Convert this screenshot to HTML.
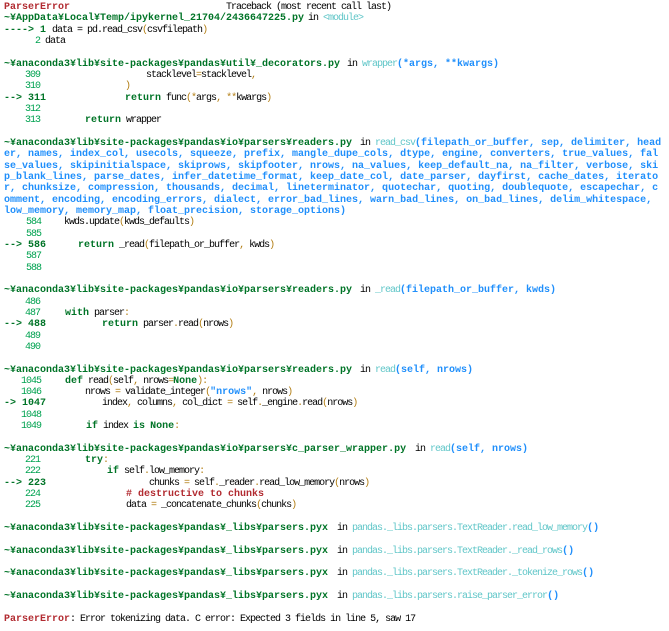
<!DOCTYPE html>
<html><head><meta charset="utf-8">
<style>
html,body{margin:0;padding:0;background:#fff;width:669px;height:629px;overflow:hidden}
body{font-family:"Liberation Mono","Noto Sans CJK JP",monospace;font-size:10px;color:#000;padding-top:2px}
.row{position:relative;height:11.33px;line-height:11.33px}
.row>span{position:absolute;top:0;white-space:pre}
.n{letter-spacing:-1px}
.b{font-weight:bold;letter-spacing:0}
.R{color:#b22b31}.G{color:#007427}.g{color:#00a250}.C{color:#60c6c8}.B{color:#208ffb}.O{color:#b27d12}
</style></head><body>
<div class="row"><span class="b R" style="left:4px">ParserError</span><span class="n" style="left:226px">Traceback (most recent call last)</span></div>
<div class="row"><span class="b G" style="left:4px">~¥AppData¥Local¥Temp/ipykernel_21704/2436647225.py</span><span class="n" style="left:308px">in <span class="C">&lt;module&gt;</span></span></div>
<div class="row"><span class="b G" style="left:4px">----&gt; 1</span><span class="n" style="left:52px">data = pd.read_csv<span class="O">(</span>csvfilepath<span class="O">)</span></span></div>
<div class="row"><span class="n g" style="left:35px">2</span><span class="n" style="left:45px">data</span></div>
<div class="row"></div>
<div class="row"><span class="b G" style="left:4px">~¥anaconda3¥lib¥site-packages¥pandas¥util¥_decorators.py</span><span class="n" style="left:347px">in <span class="C">wrapper</span><span class="b B">(*args, **kwargs)</span></span></div>
<div class="row"><span class="n g" style="left:25px">309</span><span class="n" style="left:146px">stacklevel<span class="O">=</span>stacklevel<span class="O">,</span></span></div>
<div class="row"><span class="n g" style="left:25px">310</span><span class="n" style="left:125px"><span class="O">)</span></span></div>
<div class="row"><span class="b G" style="left:4px">--&gt; 311</span><span class="n" style="left:125px"><span class="b G">return</span> func<span class="O">(*</span>args<span class="O">,</span> <span class="O">**</span>kwargs<span class="O">)</span></span></div>
<div class="row"><span class="n g" style="left:25px">312</span></div>
<div class="row"><span class="n g" style="left:25px">313</span><span class="n" style="left:85px"><span class="b G">return</span> wrapper</span></div>
<div class="row"></div>
<div class="row"><span class="b G" style="left:4px">~¥anaconda3¥lib¥site-packages¥pandas¥io¥parsers¥readers.py</span><span class="n" style="left:360px">in <span class="C">read_csv</span><span class="b B">(filepath_or_buffer, sep, delimiter, head</span></span></div>
<div class="row"><span class="b B" style="left:4px">er, names, index_col, usecols, squeeze, prefix, mangle_dupe_cols, dtype, engine, converters, true_values, fal</span></div>
<div class="row"><span class="b B" style="left:4px">se_values, skipinitialspace, skiprows, skipfooter, nrows, na_values, keep_default_na, na_filter, verbose, ski</span></div>
<div class="row"><span class="b B" style="left:4px">p_blank_lines, parse_dates, infer_datetime_format, keep_date_col, date_parser, dayfirst, cache_dates, iterato</span></div>
<div class="row"><span class="b B" style="left:4px">r, chunksize, compression, thousands, decimal, lineterminator, quotechar, quoting, doublequote, escapechar, c</span></div>
<div class="row"><span class="b B" style="left:4px">omment, encoding, encoding_errors, dialect, error_bad_lines, warn_bad_lines, on_bad_lines, delim_whitespace,</span></div>
<div class="row"><span class="b B" style="left:4px">low_memory, memory_map, float_precision, storage_options)</span></div>
<div class="row"><span class="n g" style="left:26px">584</span><span class="n" style="left:64px">kwds.update<span class="O">(</span>kwds_defaults<span class="O">)</span></span></div>
<div class="row"><span class="n g" style="left:26px">585</span></div>
<div class="row"><span class="b G" style="left:4px">--&gt; 586</span><span class="n" style="left:78px"><span class="b G">return</span> _read<span class="O">(</span>filepath_or_buffer<span class="O">,</span> kwds<span class="O">)</span></span></div>
<div class="row"><span class="n g" style="left:26px">587</span></div>
<div class="row"><span class="n g" style="left:26px">588</span></div>
<div class="row"></div>
<div class="row"><span class="b G" style="left:4px">~¥anaconda3¥lib¥site-packages¥pandas¥io¥parsers¥readers.py</span><span class="n" style="left:360px">in <span class="C">_read</span><span class="b B">(filepath_or_buffer, kwds)</span></span></div>
<div class="row"><span class="n g" style="left:25px">486</span></div>
<div class="row"><span class="n g" style="left:25px">487</span><span class="n" style="left:65px"><span class="b G">with</span> parser<span class="O">:</span></span></div>
<div class="row"><span class="b G" style="left:4px">--&gt; 488</span><span class="n" style="left:102px"><span class="b G">return</span> parser<span class="O">.</span>read<span class="O">(</span>nrows<span class="O">)</span></span></div>
<div class="row"><span class="n g" style="left:25px">489</span></div>
<div class="row"><span class="n g" style="left:25px">490</span></div>
<div class="row"></div>
<div class="row"><span class="b G" style="left:4px">~¥anaconda3¥lib¥site-packages¥pandas¥io¥parsers¥readers.py</span><span class="n" style="left:360px">in <span class="C">read</span><span class="b B">(self, nrows)</span></span></div>
<div class="row"><span class="n g" style="left:21px">1045</span><span class="n" style="left:65px"><span class="b G">def</span> read<span class="O">(</span>self<span class="O">,</span> nrows<span class="O">=</span><span class="b G">None</span><span class="O">):</span></span></div>
<div class="row"><span class="n g" style="left:21px">1046</span><span class="n" style="left:85px">nrows <span class="O">=</span> validate_integer<span class="O">(</span><span class="b B">"nrows"</span><span class="O">,</span> nrows<span class="O">)</span></span></div>
<div class="row"><span class="b G" style="left:4px">-&gt; 1047</span><span class="n" style="left:102px">index<span class="O">,</span> columns<span class="O">,</span> col_dict <span class="O">=</span> self<span class="O">.</span>_engine<span class="O">.</span>read<span class="O">(</span>nrows<span class="O">)</span></span></div>
<div class="row"><span class="n g" style="left:21px">1048</span></div>
<div class="row"><span class="n g" style="left:21px">1049</span><span class="n" style="left:86px"><span class="b G">if</span> index <span class="b G">is</span> <span class="b G">None</span><span class="O">:</span></span></div>
<div class="row"></div>
<div class="row"><span class="b G" style="left:4px">~¥anaconda3¥lib¥site-packages¥pandas¥io¥parsers¥c_parser_wrapper.py</span><span class="n" style="left:415px">in <span class="C">read</span><span class="b B">(self, nrows)</span></span></div>
<div class="row"><span class="n g" style="left:25px">221</span><span class="n" style="left:85px"><span class="b G">try</span><span class="O">:</span></span></div>
<div class="row"><span class="n g" style="left:25px">222</span><span class="n" style="left:107px"><span class="b G">if</span> self<span class="O">.</span>low_memory<span class="O">:</span></span></div>
<div class="row"><span class="b G" style="left:4px">--&gt; 223</span><span class="n" style="left:149px">chunks <span class="O">=</span> self<span class="O">.</span>_reader<span class="O">.</span>read_low_memory<span class="O">(</span>nrows<span class="O">)</span></span></div>
<div class="row"><span class="n g" style="left:25px">224</span><span class="b R" style="left:126px"># destructive to chunks</span></div>
<div class="row"><span class="n g" style="left:25px">225</span><span class="n" style="left:126px">data <span class="O">=</span> _concatenate_chunks<span class="O">(</span>chunks<span class="O">)</span></span></div>
<div class="row"></div>
<div class="row"><span class="b G" style="left:4px">~¥anaconda3¥lib¥site-packages¥pandas¥_libs¥parsers.pyx</span><span class="n" style="left:337px">in <span class="C">pandas._libs.parsers.TextReader.read_low_memory</span><span class="b B">()</span></span></div>
<div class="row"></div>
<div class="row"><span class="b G" style="left:4px">~¥anaconda3¥lib¥site-packages¥pandas¥_libs¥parsers.pyx</span><span class="n" style="left:337px">in <span class="C">pandas._libs.parsers.TextReader._read_rows</span><span class="b B">()</span></span></div>
<div class="row"></div>
<div class="row"><span class="b G" style="left:4px">~¥anaconda3¥lib¥site-packages¥pandas¥_libs¥parsers.pyx</span><span class="n" style="left:337px">in <span class="C">pandas._libs.parsers.TextReader._tokenize_rows</span><span class="b B">()</span></span></div>
<div class="row"></div>
<div class="row"><span class="b G" style="left:4px">~¥anaconda3¥lib¥site-packages¥pandas¥_libs¥parsers.pyx</span><span class="n" style="left:337px">in <span class="C">pandas._libs.parsers.raise_parser_error</span><span class="b B">()</span></span></div>
<div class="row"></div>
<div class="row"><span class="n" style="left:4px"><span class="b R">ParserError</span>: Error tokenizing data. C error: Expected 3 fields in line 5, saw 17</span></div>
</body></html>
